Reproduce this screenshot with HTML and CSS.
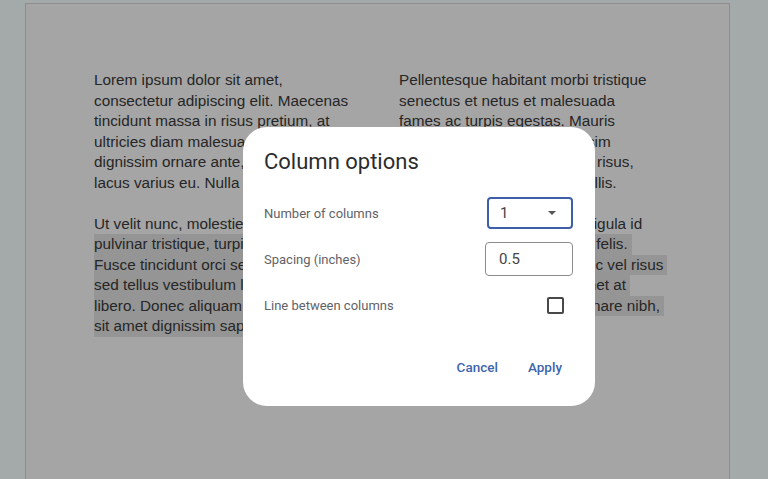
FILE: index.html
```html
<!DOCTYPE html>
<html lang="en">

<head>
    <meta charset="UTF-8">
    <meta name="viewport" content="width=device-width, initial-scale=1.0">
    <title>Column options</title>
    <link rel="stylesheet" href="styles.css">
</head>

<body>
    <!-- Document page behind the dialog -->
    <div class="page">
        <div class="columns">
            <div class="col">
                <div class="line">Lorem ipsum dolor sit amet,</div>
                <div class="line">consectetur adipiscing elit. Maecenas</div>
                <div class="line">tincidunt massa in risus pretium, at</div>
                <div class="line">ultricies diam malesuada. Nunc eu</div>
                <div class="line">dignissim ornare ante, non tempus</div>
                <div class="line">lacus varius eu. Nulla facilisi.</div>
                <div class="line blank"></div>
                <div class="line">Ut velit nunc, molestie et lacus et,</div>
                <div class="line sel">pulvinar tristique, turpis. Proin at</div>
                <div class="line sel">Fusce tincidunt orci sed massa</div>
                <div class="line sel">sed tellus vestibulum laoreet quis</div>
                <div class="line sel">libero. Donec aliquam tellus ac</div>
                <div class="line sel">sit amet dignissim sapien.</div>
            </div>
            <div class="col">
                <div class="line">Pellentesque habitant morbi tristique</div>
                <div class="line">senectus et netus et malesuada</div>
                <div class="line">fames ac turpis egestas. Mauris</div>
                <div class="line">vitae lacus eu nibh ut dignissim</div>
                <div class="line">Nunc pretium velit sed lorem risus,</div>
                <div class="line">Cras tempor ultrices nibh mollis.</div>
                <div class="line blank"></div>
                <div class="line">Sed at magna ac et tempus ligula id</div>
                <div class="line sel">Aliquam erat volutpat, in nec felis.</div>
                <div class="line sel">Maecenas a tortor sagittis nec vel risus</div>
                <div class="line sel">Integer euismod, dolor sit amet at</div>
                <div class="line sel">semper odio, vitae mauris ornare nibh,</div>
            </div>
        </div>
    </div>

    <!-- Column options dialog -->
    <div class="dialog">
        <h2 class="dialog-title">Column options</h2>

        <div class="row">
            <label>Number of columns</label>
            <div class="select">
                <span>1</span>
                <span class="caret"></span>
            </div>
        </div>

        <div class="row">
            <label for="spacing">Spacing (inches)</label>
            <input type="text" id="spacing" class="field" value="0.5">
        </div>

        <div class="row">
            <label for="divider">Line between columns</label>
            <span class="checkbox" id="divider"></span>
        </div>

        <div class="actions">
            <button type="button">Cancel</button>
            <button type="button">Apply</button>
        </div>
    </div>
</body>

</html>
```

FILE: styles.css
```css
body {
    margin: 0;
    background-color: #a4a9aa;
    font-family: "Liberation Sans", Arial, sans-serif;
    overflow: hidden;
    height: 479px;
}

.page {
    margin: 3px 0 0 25px;
    width: 705px;
    height: 520px;
    background-color: #a5a5a5;
    border: 1px solid #8e8e8e;
    box-sizing: border-box;
    padding: 66px 0 0 68px;
}

.columns {
    display: grid;
    grid-template-columns: 261px 261px;
    column-gap: 44px;
}

.line {
    font-size: 15.3px;
    line-height: 20.5px;
    height: 20.5px;
    color: #262626;
    white-space: nowrap;
    width: fit-content;
}

.line.sel {
    background-color: #959595;
    padding-right: 4px;
}

/* dialog */

.dialog {
    position: fixed;
    left: 243px;
    top: 127px;
    width: 352px;
    height: 279px;
    box-sizing: border-box;
    padding: 21px 22px 21px 21px;
    background-color: #fff;
    border-radius: 24px;
    font-family: Roboto, "Liberation Sans", sans-serif;
}

.dialog-title {
    margin: 0 0 14px;
    font-size: 22px;
    font-weight: 400;
    line-height: 28px;
    color: #2b2c2e;
}

.row {
    display: flex;
    align-items: center;
    justify-content: space-between;
    height: 46px;
}

.row label {
    font-size: 13px;
    color: #5f6368;
}

.select {
    width: 86px;
    height: 32px;
    box-sizing: border-box;
    border: 2px solid #3d5fa8;
    border-radius: 4px;
    display: flex;
    align-items: center;
    justify-content: space-between;
    padding: 0 15px 0 11px;
    font-size: 15px;
    color: #444;
}

.caret {
    width: 0;
    height: 0;
    border-left: 4px solid transparent;
    border-right: 4px solid transparent;
    border-top: 4px solid #555;
}

.field {
    width: 88px;
    height: 34px;
    box-sizing: border-box;
    border: 1px solid #8c8c8c;
    border-radius: 4px;
    padding: 0 0 0 13px;
    font-family: Roboto, "Liberation Sans", sans-serif;
    font-size: 15px;
    color: #444;
    outline: none;
}

.checkbox {
    width: 17px;
    height: 17px;
    box-sizing: border-box;
    border: 2px solid #484848;
    border-radius: 2px;
    margin-right: 9px;
}

.actions {
    display: flex;
    justify-content: flex-end;
    gap: 8px;
    margin-top: 21px;
}

.actions button {
    background: none;
    border: none;
    padding: 0 11px;
    height: 36px;
    font-family: Roboto, "Liberation Sans", sans-serif;
    font-size: 13.5px;
    font-weight: 500;
    color: #3f65ad;
    cursor: pointer;
}
```
